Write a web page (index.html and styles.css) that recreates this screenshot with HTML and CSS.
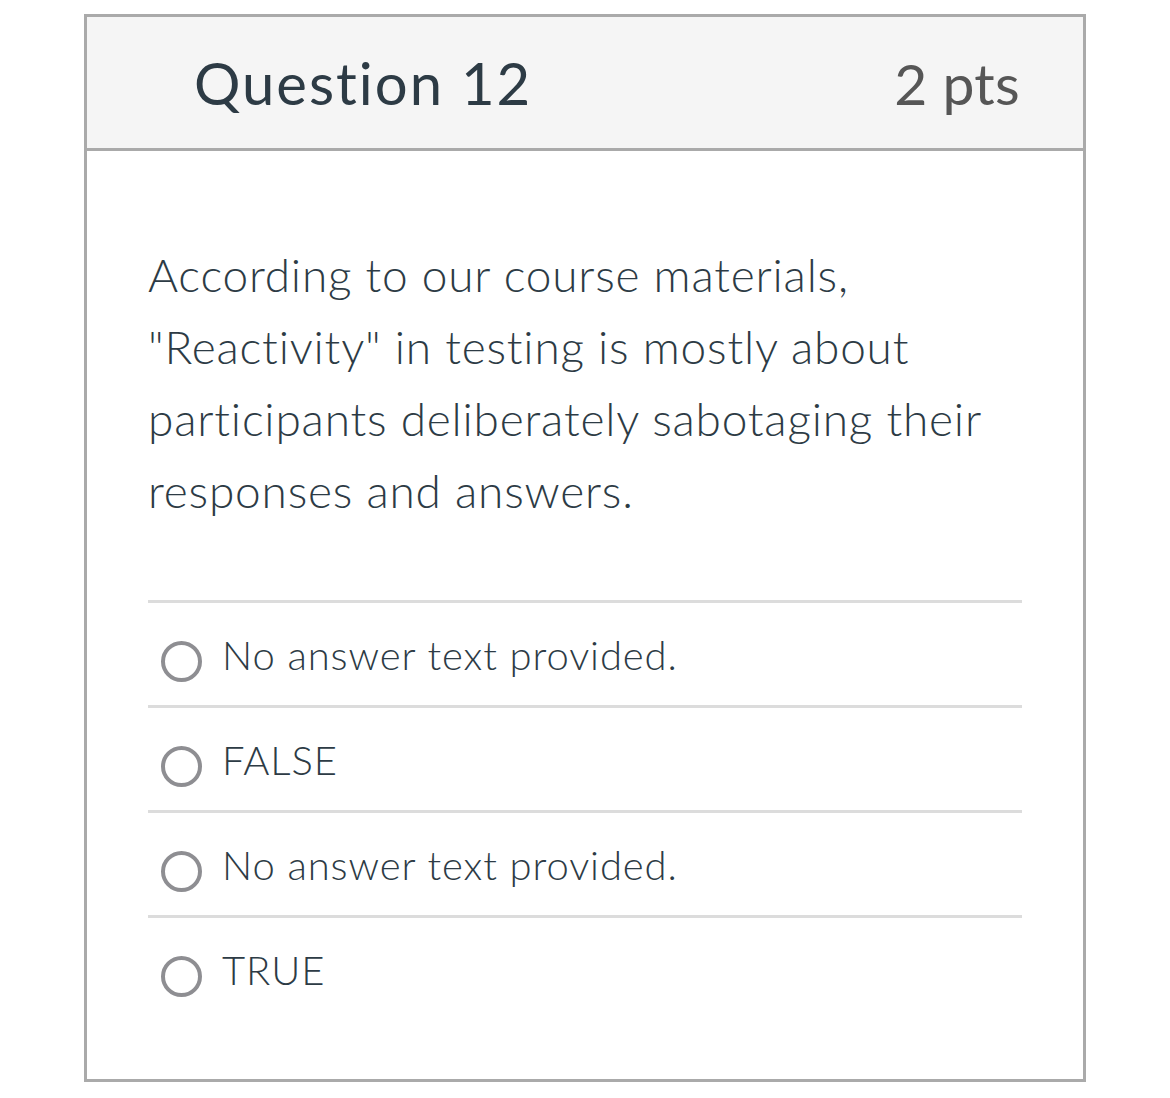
FILE: index.html
```html
<!DOCTYPE html>
<html>
<head>
<meta charset="utf-8">
<link rel="stylesheet" href="styles.css">
</head>
<body>
<div class="question">
  <div class="header">
    <div class="title">Question 12</div>
    <div class="points">2 pts</div>
  </div>
  <div class="content">
    <p class="prompt">According to our course materials, "Reactivity" in testing is mostly about participants deliberately sabotaging their responses and answers.</p>
    <div class="answers">
      <div class="answer"><span class="radio"></span><span class="label">No answer text provided.</span></div>
      <div class="answer"><span class="radio"></span><span class="label">FALSE</span></div>
      <div class="answer"><span class="radio"></span><span class="label">No answer text provided.</span></div>
      <div class="answer last"><span class="radio"></span><span class="label">TRUE</span></div>
    </div>
  </div>
</div>
</body>
</html>
```
FILE: styles.css
```css
html, body {
  margin: 0;
  padding: 0;
  background: #ffffff;
}
body {
  font-family: Lato, "Open Sans", sans-serif;
  color: #2d3b45;
}
.question {
  box-sizing: border-box;
  width: 1002px;
  height: 1068px;
  margin: 14px 0 0 84px;
  border: 3px solid #aaaaaa;
}
.header {
  box-sizing: border-box;
  height: 134px;
  background: #f5f5f5;
  border-bottom: 3px solid #aaaaaa;
  display: flex;
  align-items: center;
  justify-content: space-between;
  padding: 0 63px 0 107px;
}
.title {
  font-size: 58px;
  color: #2d3b45;
  line-height: 70px;
  letter-spacing: 2px;
}
.points {
  font-size: 57px;
  color: #565656;
  line-height: 70px;
  letter-spacing: 0.3px;
}
.content {
  padding: 88px 61px 0 61px;
}
.prompt {
  margin: 0;
  font-size: 46px;
  font-weight: 300;
  line-height: 72px;
  letter-spacing: 0.8px;
}
.answers {
  margin-top: 73px;
}
.answer {
  box-sizing: border-box;
  height: 105px;
  border-top: 3px solid #dcdcdc;
  display: flex;
  align-items: flex-start;
  padding: 28px 0 0 13px;
}
.answer.last {
  height: 164px;
}
.radio {
  box-sizing: border-box;
  width: 41px;
  height: 41px;
  border: 4px solid #8e8e92;
  border-radius: 50%;
  margin-top: 10px;
  flex: none;
}
.label {
  margin-left: 20px;
  font-size: 40px;
  font-weight: 300;
  line-height: 48px;
  letter-spacing: 0.9px;
}
```
